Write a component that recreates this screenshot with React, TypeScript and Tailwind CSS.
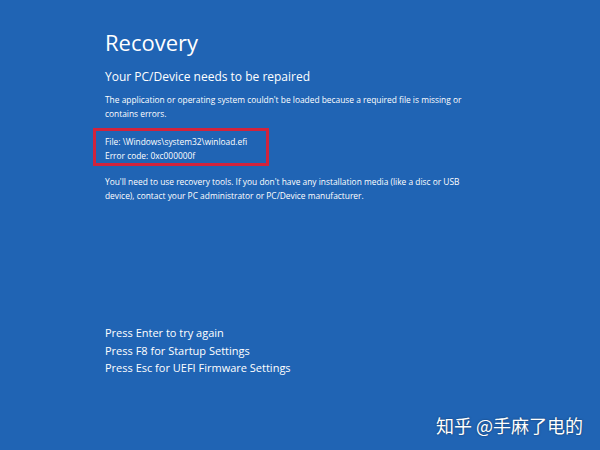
export default function App() {
  return (
    <div
      className="relative h-[450px] w-[600px] overflow-hidden bg-[#2064b4] text-white"
      style={{ fontFamily: '"Open Sans", "Noto Sans", sans-serif' }}
    >
      <div className="flex flex-col pl-[105px] pt-[28px]">
        <h1 className="text-[22px] leading-[28px] font-normal">Recovery</h1>
        <p className="mt-[13px] text-[12px] leading-[16px]">Your PC/Device needs to be repaired</p>
        <p className="mt-[8px] w-[385px] text-[8.4px] leading-[14px]">
          The application or operating system couldn't be loaded because a required file is missing or contains errors.
        </p>
        <div className="ml-[-12px] mt-[7px] w-[176px] border-[3px] border-[#d2233c] pt-[4px] pb-0 pl-[9px] text-[8.4px] leading-[14px]">
          <p>File: \Windows\system32\winload.efi</p>
          <p>Error code: 0xc000000f</p>
        </div>
        <p className="mt-[9px] w-[385px] text-[8.4px] leading-[14px]">
          You'll need to use recovery tools. If you don't have any installation media (like a disc or USB device), contact your PC administrator or PC/Device manufacturer.
        </p>
        <div className="mt-[121px] flex flex-col text-[11px] leading-[17.5px]">
          <p>Press Enter to try again</p>
          <p>Press F8 for Startup Settings</p>
          <p>Press Esc for UEFI Firmware Settings</p>
        </div>
      </div>
      <div
        className="absolute bottom-[14px] right-[17px] text-[18px] leading-[22px] [text-shadow:0_0_2px_rgba(0,0,0,0.5)]"
        style={{ fontFamily: '"Noto Sans CJK SC", sans-serif' }}
      >
        知乎 @手麻了电的
      </div>
    </div>
  );
}
